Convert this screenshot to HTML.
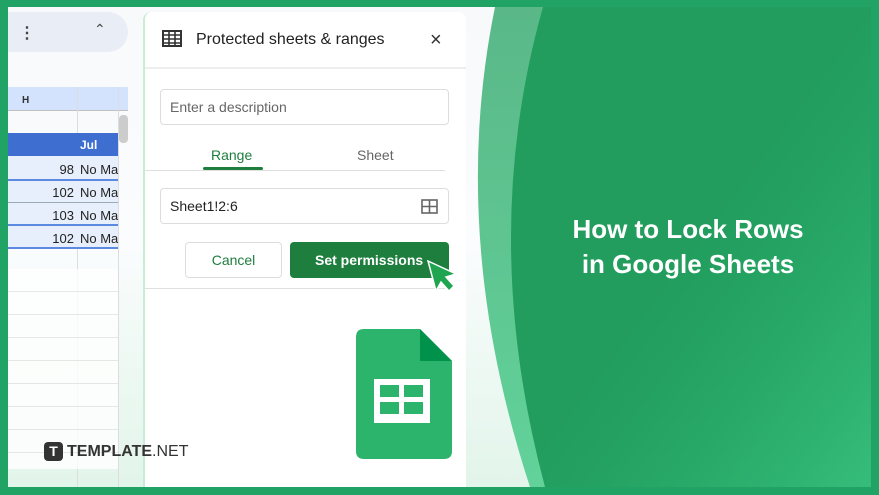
<!DOCTYPE html>
<html><head><style>
*{margin:0;padding:0;box-sizing:border-box}
body{width:879px;height:495px;overflow:hidden;position:relative;font-family:"Liberation Sans",Arial,sans-serif;background:#21a366}
.inner{position:absolute;left:8px;top:7px;width:863px;height:480px;background:linear-gradient(#f7f9fb 0%,#fafcfd 50%,#e2f5ea 100%);overflow:hidden}
.t{position:absolute;white-space:nowrap}
</style></head><body>
<div class="inner">
 <div style="position:absolute;left:0;top:5px;width:120px;height:40px;background:#e9eef6;border-radius:0 20px 20px 0"></div>
 <div class="t" style="left:11px;top:16px;font-size:16px;color:#444;font-weight:bold">⋮</div>
 <div class="t" style="left:86px;top:14px;font-size:14px;color:#444">&#8963;</div>
 <div style="position:absolute;left:0;top:80px;width:120px;height:24px;background:#d3e3fd;border-bottom:1px solid #c0c0c0"></div>
 <div style="position:absolute;left:69px;top:80px;width:1px;height:400px;background:#ddd"></div>
 <div class="t" style="left:14px;top:88px;font-size:10px;font-weight:bold;color:#333">H</div>
 <div style="position:absolute;left:0;top:126px;width:110px;height:23px;background:#3e6fd0"></div>
 <div class="t" style="left:72px;top:131px;font-size:12px;font-weight:bold;color:#fff">Jul</div>
 <div style="position:absolute;left:0;top:149px;width:110px;height:92px;background:#e7effc"></div>
 <div style="position:absolute;left:0;top:172px;width:110px;height:2px;background:#5b8ae0"></div>
 <div style="position:absolute;left:0;top:195px;width:110px;height:1px;background:#9ab"></div>
 <div style="position:absolute;left:0;top:217px;width:110px;height:2px;background:#5b8ae0"></div>
 <div style="position:absolute;left:0;top:240px;width:110px;height:2px;background:#5b8ae0"></div>
 <div class="t" style="left:0;width:66px;text-align:right;top:155px;font-size:13px;color:#222">98</div>
 <div class="t" style="left:0;width:66px;text-align:right;top:178px;font-size:13px;color:#222">102</div>
 <div class="t" style="left:0;width:66px;text-align:right;top:201px;font-size:13px;color:#222">103</div>
 <div class="t" style="left:0;width:66px;text-align:right;top:224px;font-size:13px;color:#222">102</div>
 <div class="t" style="left:72px;top:155px;font-size:13px;color:#222;width:38px;overflow:hidden">No Ma</div>
 <div class="t" style="left:72px;top:178px;font-size:13px;color:#222;width:38px;overflow:hidden">No Ma</div>
 <div class="t" style="left:72px;top:201px;font-size:13px;color:#222;width:38px;overflow:hidden">No Ma</div>
 <div class="t" style="left:72px;top:224px;font-size:13px;color:#222;width:38px;overflow:hidden">No Ma</div>
 <div style="position:absolute;left:0;top:262px;width:110px;height:200px;background:repeating-linear-gradient(#fff 0 22px,#e3e3e3 22px 23px);opacity:.8"></div>
 <div style="position:absolute;left:110px;top:80px;width:1px;height:400px;background:#ddd"></div>
 <div style="position:absolute;left:111px;top:108px;width:9px;height:28px;background:#ccc;border-radius:4px"></div>
 <div style="position:absolute;left:135px;top:5px;width:323px;height:475px;background:#fff;border-left:2px solid #c8ecd6;border-radius:8px 8px 0 0"></div>
 <svg style="position:absolute;left:154px;top:23px" width="20" height="17" viewBox="0 0 20 17"><rect x="1" y="1" width="18" height="15" fill="none" stroke="#333" stroke-width="2"/><path d="M1 5H19M1 9H19M1 13H19M7 1V16M13 1V16" stroke="#333" stroke-width="1.6"/></svg>
 <div class="t" style="left:188px;top:24px;font-size:16px;color:#222">Protected sheets &amp; ranges</div>
 <div class="t" style="left:422px;top:22px;font-size:20px;color:#333">×</div>
 <div style="position:absolute;left:137px;top:60px;width:321px;height:2px;background:#eee"></div>
 <div style="position:absolute;left:152px;top:82px;width:289px;height:36px;border:1px solid #ddd;border-radius:4px"></div>
 <div class="t" style="left:162px;top:92px;font-size:14px;color:#666">Enter a description</div>
 <div class="t" style="left:203px;top:140px;font-size:14px;color:#1e7e3e">Range</div>
 <div class="t" style="left:349px;top:140px;font-size:14px;color:#666">Sheet</div>
 <div style="position:absolute;left:195px;top:160px;width:60px;height:3px;background:#1e7e3e;border-radius:2px"></div>
 <div style="position:absolute;left:137px;top:163px;width:300px;height:1px;background:#e0e0e0"></div>
 <div style="position:absolute;left:152px;top:181px;width:289px;height:36px;border:1px solid #ddd;border-radius:4px"></div>
 <div class="t" style="left:162px;top:191px;font-size:14px;color:#222">Sheet1!2:6</div>
 <svg style="position:absolute;left:413px;top:192px" width="17" height="15"><rect x="1" y="1" width="15" height="13" fill="none" stroke="#666" stroke-width="1.6"/><path d="M1 7.5H16M8.5 1V14" stroke="#666" stroke-width="1.6"/></svg>
 <div style="position:absolute;left:177px;top:235px;width:97px;height:36px;border:1px solid #ddd;border-radius:4px"></div>
 <div class="t" style="left:177px;width:97px;text-align:center;top:245px;font-size:14px;color:#1e7e3e">Cancel</div>
 <div style="position:absolute;left:282px;top:235px;width:159px;height:36px;background:#1e7e3e;border-radius:4px"></div>
 <div class="t" style="left:307px;top:245px;font-size:14px;color:#fff;font-weight:bold">Set permissions</div>
 <div style="position:absolute;left:137px;top:281px;width:300px;height:1px;background:#e0e0e0"></div>
 <svg style="position:absolute;left:0;top:0" width="863" height="480"><defs><linearGradient id="g" x1="0" y1="0" x2="1" y2="1"><stop offset="0.5" stop-color="#2cb673" stop-opacity="0"/><stop offset="1" stop-color="#3cc582" stop-opacity="0.8"/></linearGradient><linearGradient id="l" x1="0" y1="0" x2="0" y2="1"><stop offset="0" stop-color="#5ab888"/><stop offset="1" stop-color="#62d29a"/></linearGradient></defs><path d="M487 0Q440 230 522 480H863V0Z" fill="url(#l)"/><path d="M535 0Q470 230 537 480H863V0Z" fill="#229d5e"/><path d="M535 0Q470 230 537 480H863V0Z" fill="url(#g)"/></svg>
 <svg style="position:absolute;left:418px;top:253px" width="36" height="36" viewBox="0 0 36 36"><path d="M2 1L30 14L20 17L28 26L23 31L15 22L10 31Z" fill="#1fa550" stroke="#fff" stroke-width="1.5"/></svg>
 <svg style="position:absolute;left:348px;top:322px" width="98" height="130" viewBox="0 0 98 130"><path d="M8 0H64L96 32V122Q96 130 88 130H8Q0 130 0 122V8Q0 0 8 0Z" fill="#2db46c"/><path d="M64 0L96 32H64Z" fill="#00914a"/><rect x="18" y="50" width="56" height="44" fill="#fff"/><rect x="24" y="56" width="19" height="12" fill="#2db46c"/><rect x="48" y="56" width="19" height="12" fill="#2db46c"/><rect x="24" y="73" width="19" height="12" fill="#2db46c"/><rect x="48" y="73" width="19" height="12" fill="#2db46c"/></svg>
 <div style="position:absolute;left:36px;top:435px;width:19px;height:19px;background:#333;border-radius:4px;color:#fff;font-weight:bold;font-size:14px;text-align:center;line-height:19px">T</div>
 <div class="t" style="left:59px;top:436px;font-size:16px;color:#333"><b>TEMPLATE</b>.NET</div>
 <div class="t" style="left:520px;top:205px;width:320px;text-align:center;font-size:26px;font-weight:bold;color:#fff;line-height:35px">How to Lock Rows<br>in Google Sheets</div>
</div>
</body></html>
